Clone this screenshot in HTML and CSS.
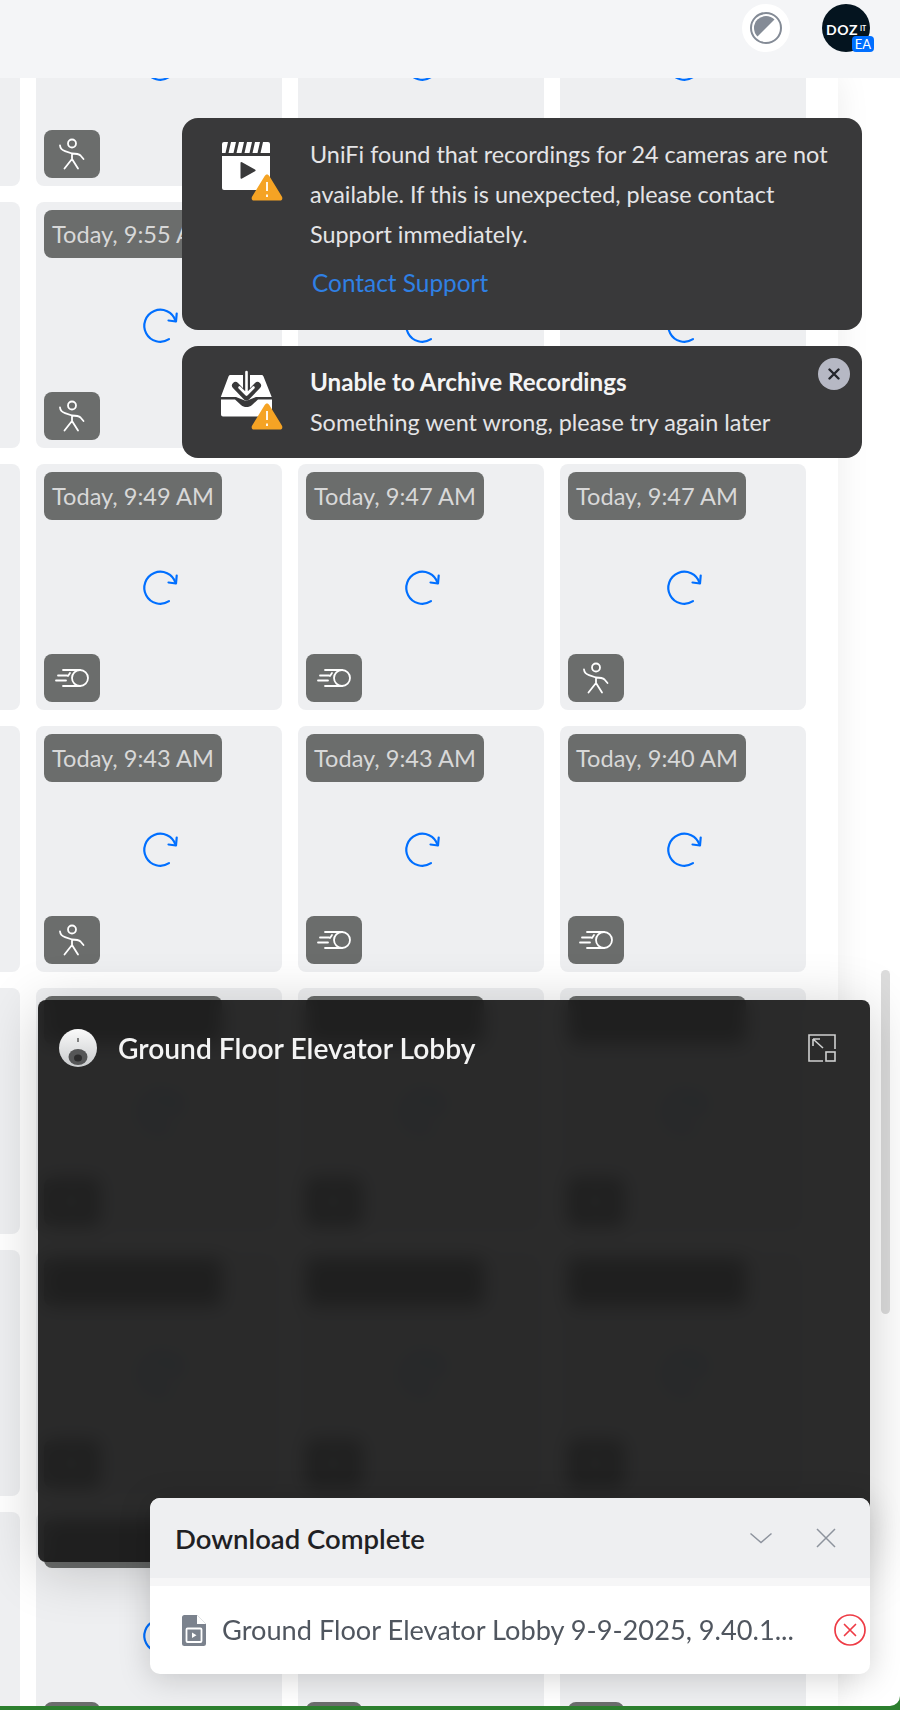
FILE: index.html
```html
<!DOCTYPE html>
<html lang="en">
<head>
<meta charset="utf-8">
<title>Detections</title>
<link rel="stylesheet" href="styles.css">
</head>
<body>
<svg class="defs" width="0" height="0" aria-hidden="true">
  <symbol id="spin" viewBox="0 0 40 40"><path d="M30 34.200A16 16 0 1 1 36.600 16" fill="none" stroke="#006fff" stroke-width="2.200" stroke-linecap="round"/><path d="M37.700 8.500L37 16.500 29.500 15.500" fill="none" stroke="#006fff" stroke-width="2.200" stroke-linecap="round" stroke-linejoin="round"/></symbol>
  <symbol id="person" viewBox="0 0 56 48"><circle cx="28" cy="13.500" r="4" fill="none" stroke="#fff" stroke-width="1.800"/><path d="M16 15.500c.3 3 2 4.600 5 5.600l7 2.400c3.500 0 7 .6 8.500 2l3 3.500M28 23.500v5.500L20.500 38.500M28 29l6 9.500" fill="none" stroke="#fff" stroke-width="1.800" stroke-linecap="round" stroke-linejoin="round"/></symbol>
  <symbol id="speed" viewBox="0 0 56 48"><circle cx="36" cy="24" r="8" fill="none" stroke="#fff" stroke-width="1.800"/><path d="M19 16h17M19 32h17M14 21.500h9M12 26.500h10M26 19l-2 3" fill="none" stroke="#fff" stroke-width="1.800" stroke-linecap="round"/></symbol>
  <symbol id="warn" viewBox="0 0 32 28"><path d="M16 1.500c1 0 1.800.6 2.300 1.500l12.700 20.800c.9 1.700 0 3.700-2 3.700H3c-2 0-2.900-2-2-3.700L13.700 3c.5-.9 1.300-1.500 2.300-1.500z" fill="#f5a324"/><path d="M16 9v9M16 21.500v2.500" stroke="#fff" stroke-width="1.800"/></symbol>
</svg>

<div class="page">
  <header class="topbar">
    <button class="round-btn" type="button">
      <svg width="32" height="32" viewBox="0 0 32 32"><circle cx="16" cy="16" r="15" fill="none" stroke="#848b96" stroke-width="2"/><path d="M7.500 24.500A12 12 0 0 1 24.500 7.500z" fill="#848b96"/></svg>
    </button>
    <div class="avatar"><span class="avatar-doz">DOZ</span><span class="avatar-it">IT</span><span class="badge-ea">EA</span></div>
  </header>

  <main class="main">
    <div class="grid">
      <div class="card"></div>
      <div class="card"><span></span><svg class="spin"><use href="#spin"/></svg><div class="chip"><svg class="chip-icon"><use href="#person"/></svg></div></div>
      <div class="card"><span></span><svg class="spin"><use href="#spin"/></svg><div class="chip"><svg class="chip-icon"><use href="#person"/></svg></div></div>
      <div class="card"><span></span><svg class="spin"><use href="#spin"/></svg><div class="chip"><svg class="chip-icon"><use href="#person"/></svg></div></div>

      <div class="card"></div>
      <div class="card"><div class="tag">Today, 9:55 AM</div><svg class="spin"><use href="#spin"/></svg><div class="chip"><svg class="chip-icon"><use href="#person"/></svg></div></div>
      <div class="card"><div class="tag tag-blank"></div><svg class="spin"><use href="#spin"/></svg><div class="chip"><svg class="chip-icon"><use href="#person"/></svg></div></div>
      <div class="card"><div class="tag tag-blank"></div><svg class="spin"><use href="#spin"/></svg><div class="chip"><svg class="chip-icon"><use href="#person"/></svg></div></div>

      <div class="card"></div>
      <div class="card"><div class="tag">Today, 9:49 AM</div><svg class="spin"><use href="#spin"/></svg><div class="chip"><svg class="chip-icon"><use href="#speed"/></svg></div></div>
      <div class="card"><div class="tag">Today, 9:47 AM</div><svg class="spin"><use href="#spin"/></svg><div class="chip"><svg class="chip-icon"><use href="#speed"/></svg></div></div>
      <div class="card"><div class="tag">Today, 9:47 AM</div><svg class="spin"><use href="#spin"/></svg><div class="chip"><svg class="chip-icon"><use href="#person"/></svg></div></div>

      <div class="card"></div>
      <div class="card"><div class="tag">Today, 9:43 AM</div><svg class="spin"><use href="#spin"/></svg><div class="chip"><svg class="chip-icon"><use href="#person"/></svg></div></div>
      <div class="card"><div class="tag">Today, 9:43 AM</div><svg class="spin"><use href="#spin"/></svg><div class="chip"><svg class="chip-icon"><use href="#speed"/></svg></div></div>
      <div class="card"><div class="tag">Today, 9:40 AM</div><svg class="spin"><use href="#spin"/></svg><div class="chip"><svg class="chip-icon"><use href="#speed"/></svg></div></div>

      <div class="card"></div>
      <div class="card"><div class="tag tag-blank"></div><svg class="spin"><use href="#spin"/></svg><div class="chip"><svg class="chip-icon"><use href="#speed"/></svg></div></div>
      <div class="card"><div class="tag tag-blank"></div><svg class="spin"><use href="#spin"/></svg><div class="chip"><svg class="chip-icon"><use href="#speed"/></svg></div></div>
      <div class="card"><div class="tag tag-blank"></div><svg class="spin"><use href="#spin"/></svg><div class="chip"><svg class="chip-icon"><use href="#speed"/></svg></div></div>

      <div class="card"></div>
      <div class="card"><div class="tag tag-blank"></div><svg class="spin"><use href="#spin"/></svg><div class="chip"><svg class="chip-icon"><use href="#speed"/></svg></div></div>
      <div class="card"><div class="tag tag-blank"></div><svg class="spin"><use href="#spin"/></svg><div class="chip"><svg class="chip-icon"><use href="#speed"/></svg></div></div>
      <div class="card"><div class="tag tag-blank"></div><svg class="spin"><use href="#spin"/></svg><div class="chip"><svg class="chip-icon"><use href="#speed"/></svg></div></div>

      <div class="card"></div>
      <div class="card"><div class="tag tag-blank"></div><svg class="spin"><use href="#spin"/></svg><div class="chip"><svg class="chip-icon"><use href="#speed"/></svg></div></div>
      <div class="card"><div class="tag tag-blank"></div><svg class="spin"><use href="#spin"/></svg><div class="chip"><svg class="chip-icon"><use href="#speed"/></svg></div></div>
      <div class="card"><div class="tag tag-blank"></div><svg class="spin"><use href="#spin"/></svg><div class="chip"><svg class="chip-icon"><use href="#speed"/></svg></div></div>
    </div>
  </main>

  <div class="scrollbar"></div>

  <div class="toasts">
    <section class="toast toast-tall">
      <div class="toast-icon">
        <svg width="64" height="62" viewBox="0 0 64 62">
          <path d="M2 4a2 2 0 0 1 2-2h4l-2.500 11H2zM11 2h5l-2.500 11h-5zM19 2h5l-2.500 11h-5zM27 2h5l-2.500 11h-5zM35 2h5l-2.500 11h-5zM43 2h5a2 2 0 0 1 2 2v9h-9.500z" fill="#fff"/>
          <path d="M2 16h48v32a2 2 0 0 1-2 2H4a2 2 0 0 1-2-2z" fill="#fff"/>
          <path d="M20.500 23a1 1 0 0 1 1.500-.8l13 7.300a1 1 0 0 1 0 1.700l-13 7.300a1 1 0 0 1-1.500-.8z" fill="#39393a"/>
          <use href="#warn" x="31" y="33" width="32" height="28"/>
        </svg>
      </div>
      <div class="toast-body">
        <p class="toast-text">UniFi found that recordings for 24 cameras are not available. If this is unexpected, please contact Support immediately.</p>
        <a class="toast-link" href="#">Contact Support</a>
      </div>
    </section>
    <section class="toast toast-short">
      <div class="toast-icon">
        <svg width="64" height="62" viewBox="0 0 64 62">
          <path d="M10.500 5h31a2 2 0 0 1 1.900 1.300L51.700 27H36l-10 4-10-4H.8L8.600 6.300A2 2 0 0 1 10.500 5z" fill="#fff"/>
          <path d="M15.500 15.500L26.500 27 37.500 15.500M26.500 1v24" fill="none" stroke="#39393a" stroke-width="7" stroke-linecap="round" stroke-linejoin="round"/>
          <path d="M16.500 16.500L26.500 26.500 36.500 16.500" fill="none" stroke="#39393a" stroke-width="3"/>
          <path d="M26.500 2v22M19.500 17.500L26.500 24.500 33.500 17.500" fill="none" stroke="#fff" stroke-width="2.600" stroke-linecap="round" stroke-linejoin="round"/>
          <path d="M1 29.500h14l6 5.500c3 2.800 8 2.800 11 0l6-5.500h14v15a2 2 0 0 1-2 2H3a2 2 0 0 1-2-2z" fill="#fff"/>
          <use href="#warn" x="31" y="32" width="32" height="28"/>
        </svg>
      </div>
      <div class="toast-body">
        <h2 class="toast-title">Unable to Archive Recordings</h2>
        <p class="toast-sub">Something went wrong, please try again later</p>
      </div>
      <button class="toast-close" type="button">
        <svg width="12" height="12" viewBox="0 0 12 12"><path d="M1.500 1.500l9 9M10.500 1.500l-9 9" stroke="#23252b" stroke-width="2.400" stroke-linecap="round"/></svg>
      </button>
    </section>
  </div>

  <section class="player">
    <div class="player-head">
      <div class="cam-icon">
        <svg width="38" height="38" viewBox="0 0 38 38">
          <defs><linearGradient id="camBody" x1="0" y1="0" x2="0" y2="1"><stop offset="0" stop-color="#fafafa"/><stop offset="1" stop-color="#c9cbcd"/></linearGradient></defs>
          <circle cx="19" cy="19" r="19" fill="url(#camBody)"/>
          <rect x="18.300" y="9" width="1.400" height="4" fill="#555"/>
          <ellipse cx="19" cy="28" rx="9.500" ry="8" fill="#555657"/>
          <ellipse cx="19" cy="29" rx="4" ry="3.500" fill="#2c2c2d"/>
        </svg>
      </div>
      <h2 class="player-title">Ground Floor Elevator Lobby</h2>
      <button class="player-expand" type="button">
        <svg width="28" height="28" viewBox="0 0 28 28"><path d="M15 1H27V15M15 27H1V1H15" fill="none" stroke="#cfd0d0" stroke-width="1.600"/><rect x="18" y="18" width="9" height="9" fill="none" stroke="#cfd0d0" stroke-width="1.600"/><path d="M5 5l10 9M5 5v7M5 5h7" fill="none" stroke="#cfd0d0" stroke-width="1.600"/></svg>
      </button>
    </div>
  </section>

  <section class="dl">
    <div class="dl-head">
      <h2 class="dl-title">Download Complete</h2>
      <svg class="dl-chev" width="24" height="12" viewBox="0 0 24 12"><path d="M1.500 1.500L12 10.500 22.500 1.500" fill="none" stroke="#8d939d" stroke-width="1.500"/></svg>
      <svg class="dl-x" width="20" height="20" viewBox="0 0 20 20"><path d="M1 1l18 18M19 1L1 19" stroke="#8d939d" stroke-width="1.500"/></svg>
    </div>
    <div class="dl-row">
      <svg class="dl-file" width="24" height="31" viewBox="0 0 24 31"><path d="M2.500 0H15l9 9v19.500a2.500 2.500 0 0 1-2.500 2.500h-19A2.500 2.500 0 0 1 0 28.500v-26A2.500 2.500 0 0 1 2.500 0z" fill="#7b828d"/><path d="M15 0v9h9z" fill="#fff"/><rect x="4.500" y="13.500" width="15" height="13.500" rx="1" fill="none" stroke="#fff" stroke-width="1.800"/><path d="M10 17.500l4.500 2.800L10 23z" fill="#fff"/></svg>
      <span class="dl-name">Ground Floor Elevator Lobby 9-9-2025, 9.40.1...</span>
      <svg class="dl-err" width="32" height="32" viewBox="0 0 32 32"><circle cx="16" cy="16" r="15" fill="none" stroke="#ee3b45" stroke-width="1.700"/><path d="M10.500 10.500l11 11M21.500 10.500l-11 11" stroke="#ee3b45" stroke-width="1.700" stroke-linecap="round"/></svg>
    </div>
  </section>
</div>
</body>
</html>
```

FILE: styles.css
```css
* { box-sizing: border-box; }
html, body { margin: 0; height: 100%; }
body {
  background: #2c7f2e;
  font-family: Lato, "Liberation Sans", sans-serif;
  overflow: hidden;
}
.defs { position: absolute; }
.page {
  position: relative;
  height: 1706px;
  background: #fff;
  border-bottom-right-radius: 10px;
  overflow: hidden;
}
.topbar {
  height: 78px;
  background: #f4f5f7;
  display: flex;
  justify-content: flex-end;
  align-items: flex-start;
  gap: 32px;
  padding: 4px 30px 0 0;
  position: relative;
  z-index: 2;
}
.round-btn {
  width: 48px;
  height: 48px;
  border: 0;
  padding: 0;
  border-radius: 50%;
  background: #fff;
  display: flex;
  align-items: center;
  justify-content: center;
}
.avatar {
  width: 48px;
  height: 48px;
  border-radius: 50%;
  background: #04141f;
  color: #fff;
  position: relative;
  display: flex;
  align-items: flex-start;
  padding: 19px 0 0 4px;
}
.avatar-doz { font-size: 14px; font-weight: 700; line-height: 14px; letter-spacing: .6px; }
.avatar-it { font-size: 7px; font-weight: 700; line-height: 7px; margin: 2px 0 0 2px; }
.badge-ea {
  position: absolute;
  left: 30px;
  top: 32px;
  width: 22px;
  height: 16px;
  border-radius: 4px;
  background: #006fff;
  font-size: 13px;
  line-height: 16px;
  text-align: center;
}
.main {
  width: 838px;
  height: 1628px;
  overflow: hidden;
  background: #fff;
  box-shadow: 0 0 32px rgba(0, 0, 0, .08);
}
.grid {
  display: grid;
  grid-template-columns: repeat(4, 246px);
  grid-auto-rows: 246px;
  gap: 16px;
  margin: -138px 0 0 -226px;
}
.card {
  background: #eeeff1;
  border-radius: 8px;
  padding: 8px;
  display: grid;
  grid-template-rows: 48px 1fr 48px;
}
.tag {
  justify-self: start;
  height: 48px;
  padding: 0 8px;
  border-radius: 8px;
  background: #6b6d6c;
  color: #d8d8d8;
  font-size: 23.6px;
  line-height: 48px;
  white-space: nowrap;
}
.tag-blank { width: 178px; }
.spin {
  width: 40px;
  height: 40px;
  align-self: center;
  justify-self: center;
}
.chip {
  width: 56px;
  height: 48px;
  border-radius: 8px;
  background: #6b6d6c;
  grid-row: 3;
}
.chip-icon { display: block; width: 56px; height: 48px; }
.scrollbar {
  position: absolute;
  left: 881px;
  top: 970px;
  width: 9px;
  height: 344px;
  border-radius: 5px;
  background: #dcdcdc;
}
.toasts {
  position: absolute;
  left: 182px;
  top: 118px;
  width: 680px;
  display: flex;
  flex-direction: column;
  gap: 16px;
  z-index: 3;
}
.toast {
  background: #39393a;
  border-radius: 16px;
  display: flex;
  position: relative;
  color: #e4e4e6;
  padding-left: 38px;
}
.toast-tall { height: 212px; padding-top: 22px; }
.toast-short { height: 112px; padding-top: 24px; }
.toast-icon { width: 90px; flex: none; }
.toast-icon svg { display: block; }
.toast-text { margin: -6px 0 0; font-size: 23.4px; line-height: 40px; width: 530px; }
.toast-link { display: block; margin: 9px 0 0 2px; color: #2f80e4; font-size: 24.4px; line-height: 40px; text-decoration: none; }
.toast-title { margin: -8px 0 0; font-size: 24.2px; line-height: 40px; font-weight: 700; color: #f4f4f5; }
.toast-sub { margin: 0; font-size: 23.4px; line-height: 40px; }
.toast-close {
  position: absolute;
  right: 12px;
  top: 12px;
  width: 32px;
  height: 32px;
  border: 0;
  padding: 0;
  border-radius: 50%;
  background: #b6b8c4;
  display: flex;
  align-items: center;
  justify-content: center;
}
.player {
  position: absolute;
  left: 38px;
  top: 1000px;
  width: 832px;
  height: 562px;
  border-radius: 8px;
  background: rgba(24, 24, 24, .916);
  backdrop-filter: blur(9px);
  box-shadow: 0 8px 56px rgba(0, 0, 0, .2);
  z-index: 3;
}
.player-head {
  display: flex;
  align-items: center;
  padding: 29px 34px 0 21px;
}
.cam-icon { width: 38px; height: 38px; flex: none; }
.cam-icon svg { display: block; }
.player-title {
  margin: 0 0 0 21px;
  flex: 1;
  color: #f4f4f4;
  font-size: 28.2px;
  line-height: 38px;
  font-weight: 600;
}
.player-expand { width: 28px; height: 28px; border: 0; padding: 0; background: none; }
.player-expand svg { display: block; }
.dl {
  position: absolute;
  left: 150px;
  top: 1498px;
  width: 720px;
  height: 176px;
  border-radius: 10px;
  overflow: hidden;
  background: #fff;
  box-shadow: 0 4px 32px rgba(0, 0, 0, .18);
  z-index: 4;
}
.dl-head {
  height: 88px;
  background: #eeeff1;
  border-bottom: 8px solid #f6f6f7;
  display: flex;
  align-items: center;
  padding: 0 34px 0 25px;
}
.dl-title { margin: 0; flex: 1; font-size: 27.5px; font-weight: 600; color: #1f2124; }
.dl-chev { margin-right: 43px; }
.dl-row {
  height: 88px;
  display: flex;
  align-items: center;
  padding: 0 4px 0 32px;
}
.dl-file { flex: none; }
.dl-name { margin: -2px 0 0 16px; flex: 1; font-size: 27.2px; color: #50565f; white-space: nowrap; }
.dl-err { flex: none; }
```
